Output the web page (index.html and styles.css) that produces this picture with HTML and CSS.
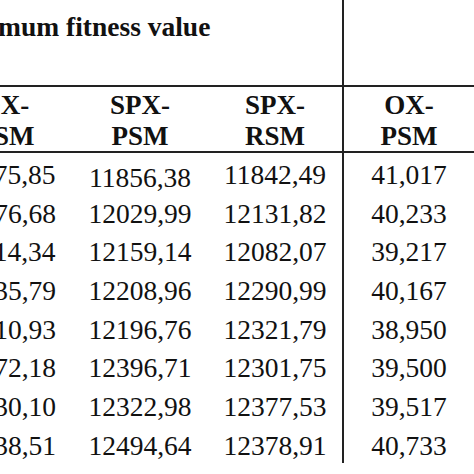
FILE: index.html
```html
<!DOCTYPE html>
<html>
<head>
<meta charset="utf-8">
<link rel="stylesheet" href="styles.css">
</head>
<body>
<div class="table">
  <div class="title span3 sep">mum fitness value</div>
  <div class="title"></div>

  <div class="head">OX-<br>RSM</div>
  <div class="head">SPX-<br>PSM</div>
  <div class="head sep">SPX-<br>RSM</div>
  <div class="head">OX-<br>PSM</div>

  <div class="cell">11975,85</div>
  <div class="cell low">11856,38</div>
  <div class="cell sep">11842,49</div>
  <div class="cell">41,017</div>

  <div class="cell">12076,68</div>
  <div class="cell">12029,99</div>
  <div class="cell sep">12131,82</div>
  <div class="cell">40,233</div>

  <div class="cell">12114,34</div>
  <div class="cell">12159,14</div>
  <div class="cell sep">12082,07</div>
  <div class="cell">39,217</div>

  <div class="cell">12135,79</div>
  <div class="cell">12208,96</div>
  <div class="cell sep">12290,99</div>
  <div class="cell">40,167</div>

  <div class="cell">12210,93</div>
  <div class="cell">12196,76</div>
  <div class="cell sep">12321,79</div>
  <div class="cell">38,950</div>

  <div class="cell">12172,18</div>
  <div class="cell">12396,71</div>
  <div class="cell sep">12301,75</div>
  <div class="cell">39,500</div>

  <div class="cell">12230,10</div>
  <div class="cell">12322,98</div>
  <div class="cell sep">12377,53</div>
  <div class="cell">39,517</div>

  <div class="cell">12238,51</div>
  <div class="cell">12494,64</div>
  <div class="cell sep">12378,91</div>
  <div class="cell">40,733</div>
</div>
</body>
</html>
```
FILE: styles.css
```css
html, body {
  margin: 0;
  padding: 0;
  background: #fff;
}
body {
  width: 474px;
  height: 474px;
  overflow: hidden;
  font-family: "Liberation Serif", "Times New Roman", serif;
  color: #111;
}
.table {
  margin-left: -63px;
  width: 537px;
  display: grid;
  grid-template-columns: 135px 136px 136px 130px;
  grid-template-rows: 87px 66px repeat(8, 38.7px);
}
.table > div {
  box-sizing: border-box;
}
.sep {
  border-right: 2px solid #222;
}
.title {
  border-bottom: 2px solid #222;
  font-weight: bold;
  font-size: 27.5px;
  line-height: 30px;
  padding-top: 12px;
  padding-left: 61px;
  white-space: nowrap;
}
.span3 {
  grid-column: span 3;
}
.head {
  border-bottom: 2px solid #222;
  font-weight: bold;
  font-size: 27px;
  line-height: 31px;
  padding-top: 3px;
  text-align: center;
}
.cell {
  font-size: 27.5px;
  line-height: 30px;
  padding-top: 7px;
  text-align: center;
  white-space: nowrap;
}
.cell.low {
  padding-top: 10px;
}
```
